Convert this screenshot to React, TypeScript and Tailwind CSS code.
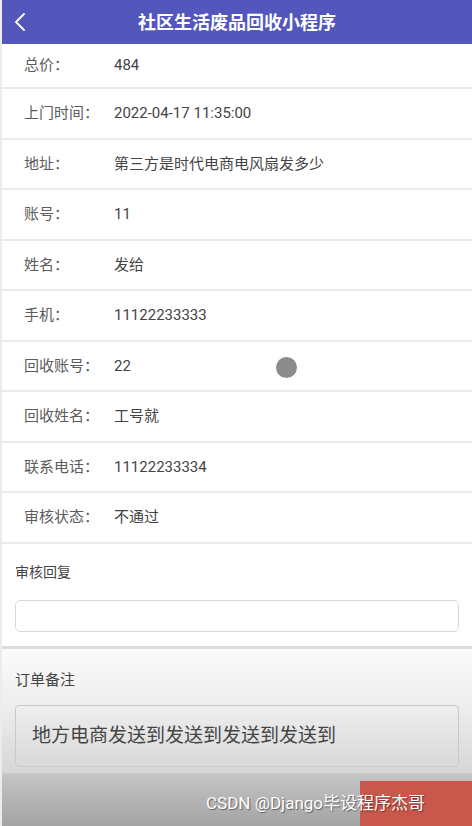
import React from 'react'

const rows: [string, string][] = [
  ['总价：', '484'],
  ['上门时间：', '2022-04-17 11:35:00'],
  ['地址：', '第三方是时代电商电风扇发多少'],
  ['账号：', '11'],
  ['姓名：', '发给'],
  ['手机：', '11122233333'],
  ['回收账号：', '22'],
  ['回收姓名：', '工号就'],
  ['联系电话：', '11122233334'],
  ['审核状态：', '不通过'],
]

function BackIcon() {
  return (
    <svg width="12" height="20" viewBox="0 0 12 20" fill="none">
      <path d="M10 2 L2 10 L10 18" stroke="white" strokeWidth="1.8" strokeLinecap="round" strokeLinejoin="round" />
    </svg>
  )
}

export default function App() {
  return (
    <div
      className="relative w-[472px] h-[826px] overflow-hidden bg-white border-l-2 border-[#ececec]"
      style={{ fontFamily: 'Roboto, "Noto Sans CJK SC", sans-serif' }}
    >
      <div className="flex h-[44px] items-center bg-[#5357bc] px-3">
        <BackIcon />
        <div className="flex-1 pr-3 text-center text-[18px] font-bold text-white">社区生活废品回收小程序</div>
      </div>

      {rows.map(([label, value], idx) => (
        <div
          key={idx}
          className={`relative flex items-center border-b-2 border-[#ebebeb] pl-[22px] text-[15px] ${idx === 0 ? 'h-[45px]' : 'h-[50.5px]'}`}
        >
          <span className="w-[90px] shrink-0 text-[#5c5c5c]">{label}</span>
          <span className="text-[#444]">{value}</span>
          {idx === 6 && <span className="absolute left-[274px] top-[15px] h-[21px] w-[21px] rounded-full bg-[#8c8c8c]" />}
        </div>
      ))}

      <div className="px-[13px] pt-[18px] pb-[14px]">
        <div className="text-[14px] text-[#444]">审核回复</div>
        <div className="mt-[17px] h-[32px] rounded-[5px] border border-[#d9d9d9] bg-white" />
      </div>

      <div className="h-[3px] bg-[#dddddd]" />

      <div className="bg-gradient-to-b from-[#fbfbfb] via-[#ececec] to-[#d6d6d6] px-[13px] pt-[20px] pb-[6px]">
        <div className="text-[15px] text-[#444]">订单备注</div>
        <div className="mt-[14px] flex h-[62px] items-center rounded-[4px] border border-[#c9c9c9] bg-gradient-to-b from-[#eeeeee] to-[#d9d9d9] px-[16px] text-[19px] text-[#444]">
          地方电商发送到发送到发送到发送到
        </div>
      </div>

      <div className="relative h-[60px] border-t-2 border-[#c8c8c8] bg-gradient-to-b from-[#c4c4c4] to-[#9f9f9f]">
        <div className="absolute right-0 top-[6px] h-[60px] w-[112px] bg-[#c8574c]" />
        <div
          className="absolute left-[204px] top-[16px] text-[17px] text-white"
          style={{ textShadow: '1px 1px 1px rgba(0,0,0,0.45)' }}
        >
          CSDN @Django毕设程序杰哥
        </div>
      </div>
    </div>
  )
}
